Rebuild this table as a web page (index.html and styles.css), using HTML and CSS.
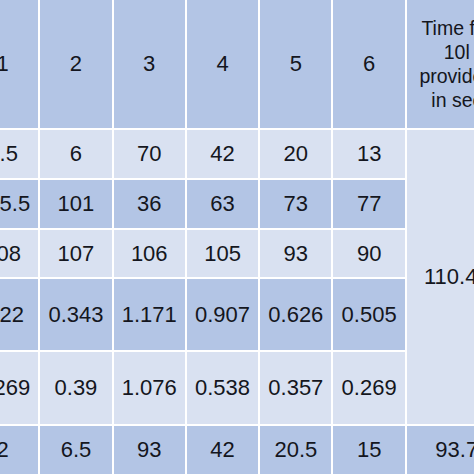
FILE: index.html
```html
<!DOCTYPE html>
<html>
<head>
<meta charset="utf-8">
<link rel="stylesheet" href="styles.css">
</head>
<body>
<div class="table">
  <div class="cell dark">1</div>
  <div class="cell dark">2</div>
  <div class="cell dark">3</div>
  <div class="cell dark">4</div>
  <div class="cell dark">5</div>
  <div class="cell dark">6</div>
  <div class="cell dark head">Time for<br>10l<br>provided<br>in sec</div>

  <div class="cell light">1.5</div>
  <div class="cell light">6</div>
  <div class="cell light">70</div>
  <div class="cell light">42</div>
  <div class="cell light">20</div>
  <div class="cell light">13</div>
  <div class="cell light merged">110.43</div>

  <div class="cell dark">105.5</div>
  <div class="cell dark">101</div>
  <div class="cell dark">36</div>
  <div class="cell dark">63</div>
  <div class="cell dark">73</div>
  <div class="cell dark">77</div>

  <div class="cell light">108</div>
  <div class="cell light">107</div>
  <div class="cell light">106</div>
  <div class="cell light">105</div>
  <div class="cell light">93</div>
  <div class="cell light">90</div>

  <div class="cell dark">0.22</div>
  <div class="cell dark">0.343</div>
  <div class="cell dark">1.171</div>
  <div class="cell dark">0.907</div>
  <div class="cell dark">0.626</div>
  <div class="cell dark">0.505</div>

  <div class="cell light">0.269</div>
  <div class="cell light">0.39</div>
  <div class="cell light">1.076</div>
  <div class="cell light">0.538</div>
  <div class="cell light">0.357</div>
  <div class="cell light">0.269</div>

  <div class="cell dark">2</div>
  <div class="cell dark">6.5</div>
  <div class="cell dark">93</div>
  <div class="cell dark">42</div>
  <div class="cell dark">20.5</div>
  <div class="cell dark">15</div>
  <div class="cell dark">93.7</div>
</div>
</body>
</html>
```
FILE: styles.css
```css
html, body {
  margin: 0;
  padding: 0;
  background: #ffffff;
  overflow: hidden;
  width: 474px;
  height: 474px;
}
.table {
  display: grid;
  grid-template-columns: repeat(6, 71.3px) 100px;
  grid-template-rows: 128px 48px 48px 47px 71px 72px 48px;
  gap: 2px;
  margin-left: -33px;
  width: max-content;
  background: #ffffff;
  font-family: "Liberation Sans", Arial, sans-serif;
  font-size: 22px;
  color: #141620;
}
.cell {
  display: flex;
  align-items: center;
  justify-content: center;
  text-align: center;
  white-space: nowrap;
}
.dark {
  background: #b3c5e5;
}
.light {
  background: #d9e1f1;
}
.head {
  font-size: 19.5px;
  line-height: 24px;
}
.merged {
  grid-column: 7;
  grid-row: 2 / span 5;
}
```
